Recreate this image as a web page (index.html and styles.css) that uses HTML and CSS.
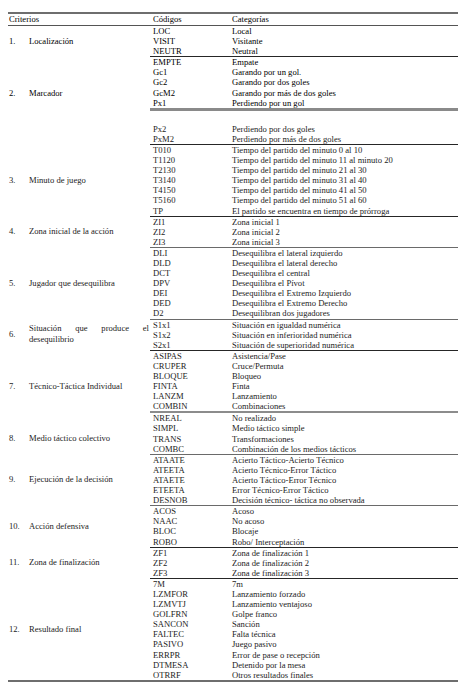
FILE: index.html
```html
<!DOCTYPE html>
<html lang="es">
<head>
<meta charset="utf-8">
<title>Criterios, códigos y categorías</title>
<link rel="stylesheet" href="styles.css">
</head>
<body>
<div class="table">
  <div class="head p1">
    <span class="h-crit">Criterios</span>
    <span class="h-code">Códigos</span>
    <span class="h-cat">Categorías</span>
  </div>

  <div class="group first p1">
    <div class="crit"><span class="num">1.</span><span class="label">Localización</span></div>
    <div class="items">
      <div class="row"><span class="code">LOC</span><span class="cat">Local</span></div>
      <div class="row"><span class="code">VISIT</span><span class="cat">Visitante</span></div>
      <div class="row"><span class="code">NEUTR</span><span class="cat">Neutral</span></div>
    </div>
  </div>

  <div class="group">
    <div class="crit up p1"><span class="num">2.</span><span class="label">Marcador</span></div>
    <div class="items">
      <div class="row p1"><span class="code">EMPTE</span><span class="cat">Empate</span></div>
      <div class="row p1"><span class="code">Gc1</span><span class="cat">Garando por un gol.</span></div>
      <div class="row p1"><span class="code">Gc2</span><span class="cat">Garando por dos goles</span></div>
      <div class="row p1"><span class="code">GcM2</span><span class="cat">Garando por más de dos goles</span></div>
      <div class="row p1"><span class="code">Px1</span><span class="cat">Perdiendo por un gol</span></div>
      <div class="pagebreak"></div>
      <div class="row"><span class="code">Px2</span><span class="cat">Perdiendo por dos goles</span></div>
      <div class="row"><span class="code">PxM2</span><span class="cat">Perdiendo por más de dos goles</span></div>
    </div>
  </div>

  <div class="group">
    <div class="crit"><span class="num">3.</span><span class="label">Minuto de juego</span></div>
    <div class="items">
      <div class="row"><span class="code">T010</span><span class="cat">Tiempo del partido del minuto 0 al 10</span></div>
      <div class="row"><span class="code">T1120</span><span class="cat">Tiempo del partido del minuto 11 al minuto 20</span></div>
      <div class="row"><span class="code">T2130</span><span class="cat">Tiempo del partido del minuto 21 al 30</span></div>
      <div class="row"><span class="code">T3140</span><span class="cat">Tiempo del partido del minuto 31 al 40</span></div>
      <div class="row"><span class="code">T4150</span><span class="cat">Tiempo del partido del minuto 41 al 50</span></div>
      <div class="row"><span class="code">T5160</span><span class="cat">Tiempo del partido del minuto 51 al 60</span></div>
      <div class="row"><span class="code">TP</span><span class="cat">El partido se encuentra en tiempo de prórroga</span></div>
    </div>
  </div>

  <div class="group">
    <div class="crit"><span class="num">4.</span><span class="label">Zona inicial de la acción</span></div>
    <div class="items">
      <div class="row"><span class="code">ZI1</span><span class="cat">Zona inicial 1</span></div>
      <div class="row"><span class="code">ZI2</span><span class="cat">Zona inicial 2</span></div>
      <div class="row"><span class="code">ZI3</span><span class="cat">Zona inicial 3</span></div>
    </div>
  </div>

  <div class="group">
    <div class="crit"><span class="num">5.</span><span class="label">Jugador que desequilibra</span></div>
    <div class="items gray">
      <div class="row"><span class="code">DLI</span><span class="cat">Desequilibra el lateral izquierdo</span></div>
      <div class="row"><span class="code">DLD</span><span class="cat">Desequilibra el lateral derecho</span></div>
      <div class="row"><span class="code">DCT</span><span class="cat">Desequilibra el central</span></div>
      <div class="row"><span class="code">DPV</span><span class="cat">Desequilibra el Pívot</span></div>
      <div class="row"><span class="code">DEI</span><span class="cat">Desequilibra el Extremo Izquierdo</span></div>
      <div class="row"><span class="code">DED</span><span class="cat">Desequilibra el Extremo Derecho</span></div>
      <div class="row"><span class="code">D2</span><span class="cat">Desequilibran dos jugadores</span></div>
    </div>
  </div>

  <div class="group">
    <div class="crit"><span class="num">6.</span><span class="label justify">Situación que produce el desequilibrio</span></div>
    <div class="items gray">
      <div class="row"><span class="code">S1x1</span><span class="cat">Situación en igualdad numérica</span></div>
      <div class="row"><span class="code">S1x2</span><span class="cat">Situación en inferioridad numérica</span></div>
      <div class="row"><span class="code">S2x1</span><span class="cat">Situación de superioridad numérica</span></div>
    </div>
  </div>

  <div class="group">
    <div class="crit down"><span class="num">7.</span><span class="label">Técnico-Táctica Individual</span></div>
    <div class="items">
      <div class="row"><span class="code">ASIPAS</span><span class="cat">Asistencia/Pase</span></div>
      <div class="row"><span class="code">CRUPER</span><span class="cat">Cruce/Permuta</span></div>
      <div class="row"><span class="code">BLOQUE</span><span class="cat">Bloqueo</span></div>
      <div class="row"><span class="code">FINTA</span><span class="cat">Finta</span></div>
      <div class="row"><span class="code">LANZM</span><span class="cat">Lanzamiento</span></div>
      <div class="row"><span class="code">COMBIN</span><span class="cat">Combinaciones</span></div>
    </div>
  </div>

  <div class="group">
    <div class="crit down"><span class="num">8.</span><span class="label">Medio táctico colectivo</span></div>
    <div class="items light">
      <div class="row"><span class="code">NREAL</span><span class="cat">No realizado</span></div>
      <div class="row"><span class="code">SIMPL</span><span class="cat">Medio táctico simple</span></div>
      <div class="row"><span class="code">TRANS</span><span class="cat">Transformaciones</span></div>
      <div class="row"><span class="code">COMBC</span><span class="cat">Combinación de los medios tácticos</span></div>
    </div>
  </div>

  <div class="group">
    <div class="crit"><span class="num">9.</span><span class="label">Ejecución de la decisión</span></div>
    <div class="items gray">
      <div class="row"><span class="code">ATAATE</span><span class="cat">Acierto Táctico-Acierto Técnico</span></div>
      <div class="row"><span class="code">ATEETA</span><span class="cat">Acierto Técnico-Error Táctico</span></div>
      <div class="row"><span class="code">ATAETE</span><span class="cat">Acierto Táctico-Error Técnico</span></div>
      <div class="row"><span class="code">ETEETA</span><span class="cat">Error Técnico-Error Táctico</span></div>
      <div class="row"><span class="code">DESNOB</span><span class="cat">Decisión técnico- táctica no observada</span></div>
    </div>
  </div>

  <div class="group">
    <div class="crit"><span class="num">10.</span><span class="label">Acción defensiva</span></div>
    <div class="items gray">
      <div class="row"><span class="code">ACOS</span><span class="cat">Acoso</span></div>
      <div class="row"><span class="code">NAAC</span><span class="cat">No acoso</span></div>
      <div class="row"><span class="code">BLOC</span><span class="cat">Blocaje</span></div>
      <div class="row"><span class="code">ROBO</span><span class="cat">Robo/ Interceptación</span></div>
    </div>
  </div>

  <div class="group">
    <div class="crit"><span class="num">11.</span><span class="label">Zona de finalización</span></div>
    <div class="items">
      <div class="row"><span class="code">ZF1</span><span class="cat">Zona de finalización 1</span></div>
      <div class="row"><span class="code">ZF2</span><span class="cat">Zona de finalización 2</span></div>
      <div class="row"><span class="code">ZF3</span><span class="cat">Zona de finalización 3</span></div>
    </div>
  </div>

  <div class="group last">
    <div class="crit"><span class="num">12.</span><span class="label">Resultado final</span></div>
    <div class="items">
      <div class="row"><span class="code">7M</span><span class="cat">7m</span></div>
      <div class="row"><span class="code">LZMFOR</span><span class="cat">Lanzamiento forzado</span></div>
      <div class="row"><span class="code">LZMVTJ</span><span class="cat">Lanzamiento ventajoso</span></div>
      <div class="row"><span class="code">GOLFRN</span><span class="cat">Golpe franco</span></div>
      <div class="row"><span class="code">SANCON</span><span class="cat">Sanción</span></div>
      <div class="row"><span class="code">FALTEC</span><span class="cat">Falta técnica</span></div>
      <div class="row"><span class="code">PASIVO</span><span class="cat">Juego pasivo</span></div>
      <div class="row"><span class="code">ERRPR</span><span class="cat">Error de pase o recepción</span></div>
      <div class="row"><span class="code">DTMESA</span><span class="cat">Detenido por la mesa</span></div>
      <div class="row"><span class="code">OTRRF</span><span class="cat">Otros resultados finales</span></div>
    </div>
  </div>
</div>
</body>
</html>
```

FILE: styles.css
```css
* {
  box-sizing: border-box;
}

html, body {
  margin: 0;
  padding: 0;
  background: #ffffff;
}

body {
  font-family: "Liberation Serif", "Times New Roman", serif;
  font-size: 8.6px;
  color: #1c1c1c;
}

.table {
  width: 450px;
  margin: 12px 0 0 8px;
  border-top: 2px solid #6e6e6e;
  border-bottom: 2px solid #6e6e6e;
}

.p1 {
  color: #000;
}

.head {
  display: grid;
  grid-template-columns: 145px 79px 1fr;
  height: 12px;
  line-height: 11px;
  border-bottom: 1.5px solid #555;
}

.h-crit {
  padding-left: 1px;
}

.group {
  display: grid;
  grid-template-columns: 142px 1fr;
}

.crit {
  display: flex;
  align-items: center;
  padding-left: 1px;
}

.crit.up {
  padding-bottom: 15px;
}

.crit.down {
  padding-top: 10px;
}

.num {
  width: 20px;
  flex: none;
}

.label {
  width: 120px;
}

.label.justify {
  text-align: justify;
  line-height: 11px;
}

.items {
  border-top: 1.5px solid #262626;
  padding-left: 3px;
}

.items.gray {
  border-top-color: #6a6a6a;
}

.items.light {
  border-top: 2px solid #8c8c8c;
}

.group.first .items {
  border-top: none;
}

.row {
  display: grid;
  grid-template-columns: 79px 1fr;
  height: 10.1px;
  line-height: 10.1px;
  white-space: nowrap;
}

.pagebreak {
  height: 16px;
  margin-left: -3px;
  border-top: 3px solid #8a8a8a;
}
```
